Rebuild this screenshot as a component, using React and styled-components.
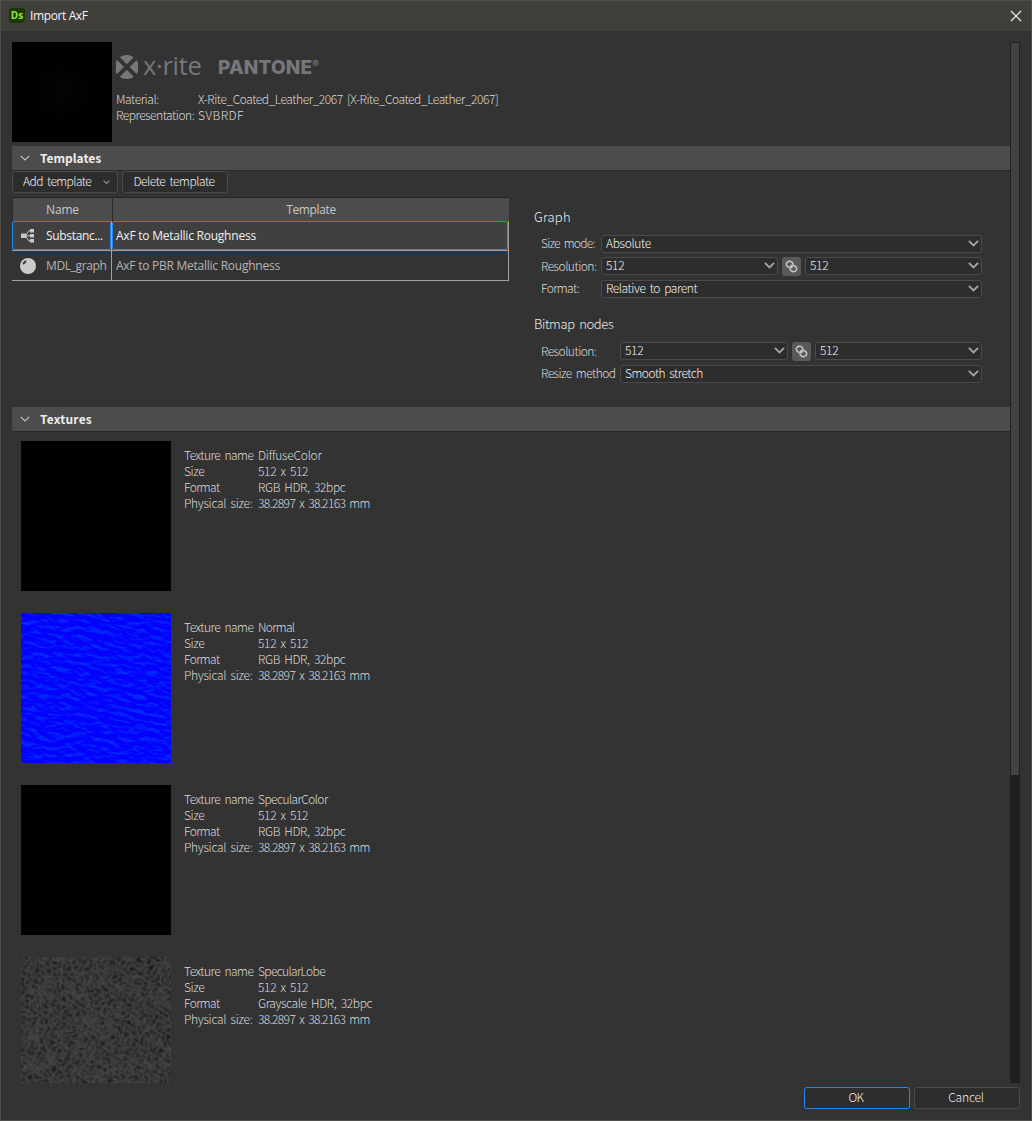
import styled, { createGlobalStyle } from 'styled-components';

const UI_FONT = '"Noto Sans CJK JP", "Liberation Sans", sans-serif';
const TABLE_FONT = '"Open Sans", "Noto Sans", sans-serif';

const GlobalStyle = createGlobalStyle`
  * {
    box-sizing: border-box;
  }

  body {
    margin: 0;
    background: #333333;
  }
`;

const Window = styled.div`
  display: flex;
  flex-direction: column;
  width: 1032px;
  height: 1121px;
  border: 1px solid #504f4c;
  background: #333333;
  color: #dadada;
  font: 300 12px/16px ${UI_FONT};
  white-space: nowrap;
  word-spacing: 2px;
`;

const Text = styled.span`
  letter-spacing: ${(props) => props.$track || 0}px;
`;

const TitleBar = styled.header`
  display: flex;
  align-items: center;
  height: 30px;
  padding: 0 9px 1px 8px;
  background: #403f3a;
  color: #f4f4f4;
  font: 400 12px/16px ${TABLE_FONT};
  word-spacing: 0;
`;

const AppBadge = styled.div`
  width: 16px;
  height: 15px;
  margin-right: 5px;
  border-radius: 3px;
  background: #1d3804;
  color: #93e83c;
  font: 700 10px/14px ${TABLE_FONT};
  text-align: center;
`;

const CloseIcon = styled.svg`
  margin-left: auto;
`;

const Main = styled.main`
  display: flex;
  height: 1052px;
  padding: 11px 11px 0;
`;

const ScrollArea = styled.div`
  width: 998px;
  overflow: hidden;
`;

const ScrollTrack = styled.div`
  width: 10px;
  background: #202020;
`;

const ScrollThumb = styled.div`
  height: 733px;
  border: 1px solid #202020;
  border-bottom: 0;
  background: #424242;
`;

const Summary = styled.section`
  display: flex;
  gap: 4px;
  height: 104px;
`;

const MaterialPreview = styled.div`
  width: 100px;
  height: 100px;
  background: radial-gradient(circle at 50% 50%, #050505 0, #000000 45%);
`;

const Brands = styled.div`
  display: flex;
  height: 49px;
  color: #77777b;
`;

const BrandMark = styled.svg`
  margin-top: 13px;
`;

const XRite = styled.span`
  width: 75px;
  margin-left: 5px;
  font: 400 25.5px/46px "Open Sans", sans-serif;
  letter-spacing: -0.3px;
`;

const Pantone = styled.span`
  font: 800 19px/52px Inter, sans-serif;
  letter-spacing: 0.2px;

  sup {
    font-size: 10px;
    font-weight: 600;
    line-height: 0;
    vertical-align: 6px;
  }
`;

const Property = styled.div`
  display: flex;
  height: 16px;
`;

const PropertyLabel = styled(Text)`
  width: ${(props) => props.$width}px;
`;

const SectionHeader = styled.div`
  display: flex;
  align-items: center;
  gap: 10px;
  height: 25px;
  padding: 0 8px 1px;
  border-bottom: 1px solid #2a2a2a;
  background: #4c4c4c;
  color: #eeeeee;
  font-weight: 700;
`;

const TemplatesBody = styled.div`
  display: flex;
  gap: 25px;
  height: 236px;
`;

const TemplateList = styled.div`
  width: 497px;
`;

const Toolbar = styled.div`
  display: flex;
  gap: 4px;
  margin-bottom: 4px;
`;

const Button = styled.button`
  display: flex;
  align-items: center;
  justify-content: ${(props) => (props.$menu ? 'space-between' : 'center')};
  width: 106px;
  height: 22px;
  padding: ${(props) => (props.$menu ? '0 7px 2px 10px' : '0 2px 2px 0')};
  border: 1px solid ${(props) => (props.$primary ? '#2289ee' : '#4b4b4b')};
  border-radius: 3px;
  background: #2d2d2d;
  color: #eeeeee;
  font: inherit;
  word-spacing: inherit;

  svg {
    margin-top: 2px;
  }
`;

const TableHead = styled.div`
  display: grid;
  grid-template-columns: 100px 1fr;
  height: 24px;
  border-top: 1px solid #232323;
  background: #4c4c4c;
  color: #c8c8c8;
  font: 400 12px/24px ${TABLE_FONT};
  text-align: center;

  div {
    border-left: 1px solid #2a2a2a;
  }
`;

const TableRow = styled.div`
  display: grid;
  grid-template-columns: 100px 1fr;
  height: 30px;
  color: ${(props) => (props.$selected ? '#f0f0f0' : '#b4b4b4')};
  font: 400 12px/16px ${TABLE_FONT};
  word-spacing: 0;
`;

const Cell = styled.div`
  border-right: 1px solid #a0a0a0;
  border-bottom: 1px solid #a0a0a0;
`;

const CellBox = styled.div`
  display: flex;
  align-items: center;
  height: 29px;
  padding-left: ${(props) => props.$inset || 3}px;
  border: 1px solid ${(props) => (props.$selected ? '#2289ee' : 'transparent')};
  border-radius: 2px;
  background: ${(props) => (props.$selected ? '#404040' : 'transparent')};

  svg {
    flex: none;
    width: 16px;
    margin-right: 10px;
  }
`;

const Options = styled.div`
  width: 448px;
  padding-top: 36px;
`;

const GroupTitle = styled.h3`
  height: 20px;
  margin: 0 0 8px;
  color: #ececec;
  font: 300 13px/20px ${UI_FONT};
`;

const Fields = styled.div`
  display: flex;
  flex-direction: column;
  gap: 4px;
  margin-bottom: 16px;
`;

const Field = styled.div`
  display: flex;
  gap: 4px;
  height: ${(props) => props.$height || 18}px;
`;

const FieldLabel = styled(Text)`
  flex: none;
  width: ${(props) => props.$width - 4}px;
  padding-left: 7px;
  line-height: ${(props) => props.$line || 16}px;
`;

const SelectBox = styled.div`
  display: flex;
  flex: ${(props) => (props.$width ? 'none' : 1)};
  align-items: center;
  justify-content: space-between;
  width: ${(props) => (props.$width ? `${props.$width}px` : 'auto')};
  height: 18px;
  padding: 0 2.5px 2px 4px;
  border: 1px solid #4b4b4b;
  border-radius: 3px;
  background: #2d2d2d;
  color: #f2f2f2;

  svg {
    margin-top: 1px;
  }
`;

const LinkToggle = styled.div`
  display: flex;
  align-items: center;
  justify-content: center;
  width: 19px;
  height: 19px;
  border-radius: 3px;
  background: #595959;
`;

const TextureList = styled.div`
  display: flex;
  flex-direction: column;
  gap: 22px;
  padding: 9px 9px 0;
`;

const TextureItem = styled.div`
  display: flex;
  gap: 13px;
  height: 150px;
`;

const TextureInfo = styled.div`
  padding-top: 6px;
`;

const Footer = styled.footer`
  display: flex;
  justify-content: flex-end;
  gap: 4px;
  padding: 4px 11px 0;
`;

function Chevron({ width = 11, color = '#a4a4a4', stroke = 1.7 }) {
  return (
    <svg width={width} height={width * 0.6} viewBox="0 0 10 6" fill="none" stroke={color} strokeWidth={stroke}>
      <path d="M0.8 0.8 L5 5 L9.2 0.8" />
    </svg>
  );
}

function GraphIcon() {
  return (
    <svg width="16" height="14" viewBox="0 0 16 14" fill="#c8c8c8">
      <rect x="1" y="4.5" width="5" height="4.5" />
      <rect x="10" y="0" width="4" height="3.5" />
      <rect x="10" y="5" width="4" height="3.5" />
      <rect x="10" y="10" width="4" height="3.5" />
      <path d="M10.5 1.8 H8.8 L5.5 6.8 L8.8 11.8 H10.5 M5.5 6.8 H10.5" fill="none" stroke="#c8c8c8" strokeWidth="1" />
    </svg>
  );
}

function SphereIcon() {
  return (
    <svg width="16" height="16" viewBox="0 0 16 16">
      <circle cx="8" cy="8" r="8" fill="#cbcbcb" />
      <path d="M2.6 6.6 C2.4 4 4 2.4 6.6 2.4 C6.4 4.6 5 6.2 2.6 6.6Z" fill="#3c3c3c" />
    </svg>
  );
}

function ChainIcon() {
  return (
    <svg width="13" height="13" viewBox="0 0 13 13" fill="none" stroke="#c8c8c8" strokeWidth="1.5" strokeLinecap="round">
      <path d="M3.6 7.2 C1.4 6.4 0.6 4 2 2.4 C3.6 0.7 6 1 7.4 2.8 C8.8 4.8 8 6.6 6.2 7.6" />
      <path d="M9.4 5.8 C11.6 6.6 12.4 9 11 10.6 C9.4 12.3 7 12 5.6 10.2 C4.2 8.2 5 6.4 6.8 5.4" />
    </svg>
  );
}

// Leather surfaces are generated from noise, flat ones are plain fills.
function TexturePreview({ kind }) {
  return (
    <svg width="150" height="150" viewBox="0 0 150 150">
      <defs>
        <filter id="normalMap" x="0" y="0" width="100%" height="100%" colorInterpolationFilters="sRGB">
          <feTurbulence type="fractalNoise" baseFrequency="0.09 0.2" numOctaves="4" seed="8" />
          <feDiffuseLighting surfaceScale="1.6" lightingColor="#ffffff">
            <feDistantLight azimuth="265" elevation="52" />
          </feDiffuseLighting>
          <feColorMatrix values="0 0 0 0 0.01  0.75 0 0 0 -0.56  0 0 0 0 0.99  0 0 0 0 1" />
        </filter>
        <filter id="lobeMap" x="0" y="0" width="100%" height="100%" colorInterpolationFilters="sRGB">
          <feTurbulence type="turbulence" baseFrequency="0.19" numOctaves="3" seed="5" />
          <feColorMatrix values="-0.18 -0.14 0 0 0.31  -0.18 -0.14 0 0 0.31  -0.18 -0.14 0 0 0.31  0 0 0 0 1" />
        </filter>
      </defs>
      <rect width="150" height="150" fill="#000000" />
      {kind === 'normalMap' && (
        <rect x="-40" y="-40" width="230" height="230" filter="url(#normalMap)" transform="rotate(12 75 75)" />
      )}
      {kind === 'lobeMap' && (
        <rect x="-50" y="-50" width="250" height="250" filter="url(#lobeMap)" transform="rotate(33 75 75)" />
      )}
    </svg>
  );
}

function Select({ width, track, children }) {
  return (
    <SelectBox $width={width}>
      <Text $track={track}>{children}</Text>
      <Chevron />
    </SelectBox>
  );
}

function ResolutionField({ labelWidth, width }) {
  return (
    <Field $height={19}>
      <FieldLabel $width={labelWidth} $line={18} $track={-0.5}>Resolution:</FieldLabel>
      <Select width={width} track={-0.3}>512</Select>
      <LinkToggle>
        <ChainIcon />
      </LinkToggle>
      <Select track={-0.3}>512</Select>
    </Field>
  );
}

const textures = [
  { name: 'DiffuseColor', nameTrack: -0.25, format: 'RGB HDR, 32bpc', formatTrack: -0.37, kind: 'flat' },
  { name: 'Normal', nameTrack: -0.7, format: 'RGB HDR, 32bpc', formatTrack: -0.37, kind: 'normalMap' },
  { name: 'SpecularColor', nameTrack: -0.57, format: 'RGB HDR, 32bpc', formatTrack: -0.37, kind: 'flat' },
  { name: 'SpecularLobe', nameTrack: -0.65, format: 'Grayscale HDR, 32bpc', formatTrack: -0.37, kind: 'lobeMap' },
];

export default function App() {
  return (
    <>
      <GlobalStyle />
      <Window>
        <TitleBar>
          <AppBadge>Ds</AppBadge>
          <Text $track={-0.38}>Import AxF</Text>
          <CloseIcon width="12" height="12" viewBox="0 0 12 12" stroke="#f4f4f4" strokeWidth="1.2">
            <path d="M1 1 L11 11 M11 1 L1 11" />
          </CloseIcon>
        </TitleBar>

        <Main>
          <ScrollArea>
            <Summary>
              <MaterialPreview />
              <div>
                <Brands>
                  <BrandMark width="22" height="24" viewBox="0 0 22 24">
                    <circle cx="10.8" cy="12" r="12" fill="currentColor" />
                    <path d="M0 1.2 L21.6 22.8 M21.6 1.2 L0 22.8" stroke="#333333" strokeWidth="4" />
                  </BrandMark>
                  <XRite>x·rite</XRite>
                  <Pantone>PANTONE<sup>®</sup></Pantone>
                </Brands>
                <Property>
                  <PropertyLabel $width={82} $track={-0.42}>Material:</PropertyLabel>
                  <Text $track={-0.44}>X-Rite_Coated_Leather_2067 [X-Rite_Coated_Leather_2067]</Text>
                </Property>
                <Property>
                  <PropertyLabel $width={82} $track={-0.48}>Representation:</PropertyLabel>
                  <Text $track={0.5}>SVBRDF</Text>
                </Property>
              </div>
            </Summary>

            <SectionHeader>
              <Chevron width={10} color="#c0c0c0" stroke={1.2} />
              <Text>Templates</Text>
            </SectionHeader>
            <TemplatesBody>
              <TemplateList>
                <Toolbar>
                  <Button $menu>
                    <Text $track={-0.57}>Add template</Text>
                    <Chevron width={7} color="#8c8c8c" />
                  </Button>
                  <Button>
                    <Text $track={-0.45}>Delete template</Text>
                  </Button>
                </Toolbar>
                <TableHead>
                  <div><Text $track={-0.2}>Name</Text></div>
                  <div><Text $track={-0.35}>Template</Text></div>
                </TableHead>
                <TableRow $selected>
                  <Cell>
                    <CellBox $selected $inset={7}>
                      <GraphIcon />
                      <Text $track={-0.33}>Substanc...</Text>
                    </CellBox>
                  </Cell>
                  <Cell>
                    <CellBox $selected>
                      <Text $track={-0.23}>AxF to Metallic Roughness</Text>
                    </CellBox>
                  </Cell>
                </TableRow>
                <TableRow>
                  <Cell>
                    <CellBox $inset={7}>
                      <SphereIcon />
                      <Text $track={-0.38}>MDL_graph</Text>
                    </CellBox>
                  </Cell>
                  <Cell>
                    <CellBox>
                      <Text $track={-0.25}>AxF to PBR Metallic Roughness</Text>
                    </CellBox>
                  </Cell>
                </TableRow>
              </TemplateList>

              <Options>
                <GroupTitle><Text $track={0.2}>Graph</Text></GroupTitle>
                <Fields>
                  <Field>
                    <FieldLabel $width={67} $track={-0.75}>Size mode:</FieldLabel>
                    <Select track={-0.35}>Absolute</Select>
                  </Field>
                  <ResolutionField labelWidth={67} width={177} />
                  <Field>
                    <FieldLabel $width={67} $track={-0.6}>Format:</FieldLabel>
                    <Select track={-0.43}>Relative to parent</Select>
                  </Field>
                </Fields>
                <GroupTitle><Text $track={-0.38}>Bitmap nodes</Text></GroupTitle>
                <Fields>
                  <ResolutionField labelWidth={86} width={168} />
                  <Field>
                    <FieldLabel $width={86} $track={-0.53}>Resize method</FieldLabel>
                    <Select track={-0.5}>Smooth stretch</Select>
                  </Field>
                </Fields>
              </Options>
            </TemplatesBody>

            <SectionHeader>
              <Chevron width={10} color="#c0c0c0" stroke={1.2} />
              <Text $track={0.2}>Textures</Text>
            </SectionHeader>
            <TextureList>
              {textures.map((texture) => (
                <TextureItem key={texture.name}>
                  <TexturePreview kind={texture.kind} />
                  <TextureInfo>
                    <Property>
                      <PropertyLabel $width={74} $track={-0.5}>Texture name</PropertyLabel>
                      <Text $track={texture.nameTrack}>{texture.name}</Text>
                    </Property>
                    <Property>
                      <PropertyLabel $width={74} $track={-0.4}>Size</PropertyLabel>
                      <Text $track={-0.35}>512 x 512</Text>
                    </Property>
                    <Property>
                      <PropertyLabel $width={74} $track={-0.6}>Format</PropertyLabel>
                      <Text $track={texture.formatTrack}>{texture.format}</Text>
                    </Property>
                    <Property>
                      <PropertyLabel $width={74} $track={-0.28}>Physical size:</PropertyLabel>
                      <Text $track={-0.62}>38.2897 x 38.2163 mm</Text>
                    </Property>
                  </TextureInfo>
                </TextureItem>
              ))}
            </TextureList>
          </ScrollArea>
          <ScrollTrack>
            <ScrollThumb />
          </ScrollTrack>
        </Main>

        <Footer>
          <Button $primary><Text $track={-0.6}>OK</Text></Button>
          <Button><Text $track={-0.2}>Cancel</Text></Button>
        </Footer>
      </Window>
    </>
  );
}
